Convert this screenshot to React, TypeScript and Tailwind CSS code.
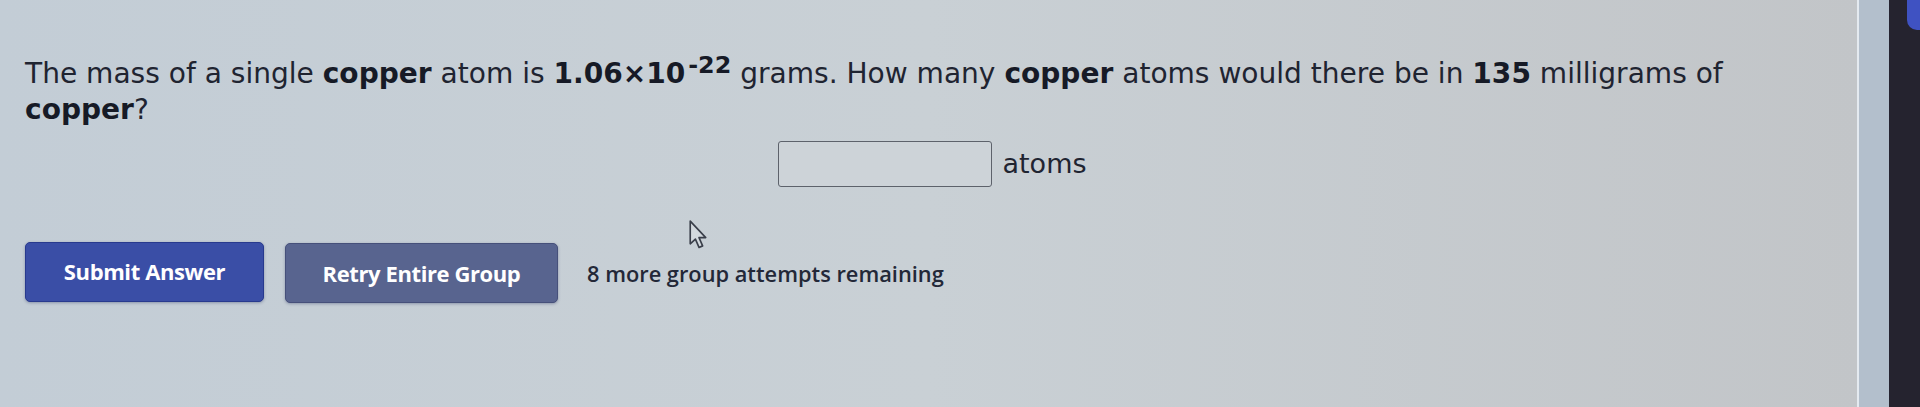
import React from 'react'

const QUESTION_FONT = { fontFamily: '"DejaVu Sans", Verdana, sans-serif' }
const UI_FONT = { fontFamily: '"Open Sans", "Noto Sans", sans-serif' }

function Cursor() {
  return (
    <svg
      className="absolute left-[688px] top-[219px]"
      width="21"
      height="31"
      viewBox="0 0 20 30"
      fill="none"
    >
      <path
        d="M2 2 L2 24 L7 19.5 L10.5 27.5 L14 26 L10.5 18 L17 18 Z"
        fill="#d3d9de"
        stroke="#3a3f4a"
        strokeWidth="1.6"
        strokeLinejoin="round"
      />
    </svg>
  )
}

function Question() {
  return (
    <p className="text-[28.05px] leading-[36px] text-[#1f2431] max-w-[1770px]" style={QUESTION_FONT}>
      The mass of a single <b className="font-bold text-[#161a26]">copper</b> atom is{' '}
      <b className="font-bold text-[#161a26]">
        1.06×10<sup className="ml-[3px] text-[0.85em] top-[-0.42em]">-22</sup>
      </b>{' '}
      grams. How many <b className="font-bold text-[#161a26]">copper</b> atoms would there be in{' '}
      <b className="font-bold text-[#161a26]">135</b> milligrams of{' '}
      <b className="font-bold text-[#161a26]">copper</b>?
    </p>
  )
}

function AnswerRow() {
  return (
    <div className="mt-[13px] flex items-center justify-center gap-[10px] pl-[8px]">
      <input
        type="text"
        aria-label="answer"
        className="h-[46px] w-[214px] rounded-[3px] border-[1.5px] border-[#5d626b] bg-[#cdd3d8] outline-none"
      />
      <span className="text-[27px] text-[#1f2431]" style={QUESTION_FONT}>
        atoms
      </span>
    </div>
  )
}

function Actions() {
  return (
    <div className="mt-[53px] flex items-center" style={UI_FONT}>
      <button className="flex h-[60px] w-[239px] items-center justify-center rounded-[5px] border border-[#283a8e] bg-[#3a4ea6] text-[22px] font-bold tracking-[-0.4px] text-white shadow-[0_1px_3px_rgba(30,40,90,0.35)]">
        Submit Answer
      </button>
      <button className="ml-[21px] mt-[3px] flex h-[60px] w-[273px] items-center justify-center rounded-[5px] border border-[#46507a] bg-[#58648f] text-[22px] font-bold tracking-[-0.4px] text-white shadow-[0_1px_3px_rgba(30,40,90,0.35)]">
        Retry Entire Group
      </button>
      <span className="ml-[29px] mt-[6px] text-[21.8px] font-semibold text-[#232838]">
        8 more group attempts remaining
      </span>
    </div>
  )
}

export default function App() {
  return (
    <div className="flex h-[407px] w-[1920px] overflow-hidden">
      <main className="relative flex-1 bg-linear-to-r from-[#c3cdd6] via-[#c9d0d5] to-[#c2c5c8] px-[25px] pt-[56px]">
        <Question />
        <AnswerRow />
        <Actions />
        <Cursor />
      </main>
      <div className="w-[32px] border-l-2 border-[#e4eaf0] bg-[#b3bfcc]" />
      <div className="flex w-[31px] justify-end bg-[#25232f]">
        <div className="h-[30px] w-[13px] rounded-bl-[10px] bg-[#3f52c2]" />
      </div>
    </div>
  )
}
